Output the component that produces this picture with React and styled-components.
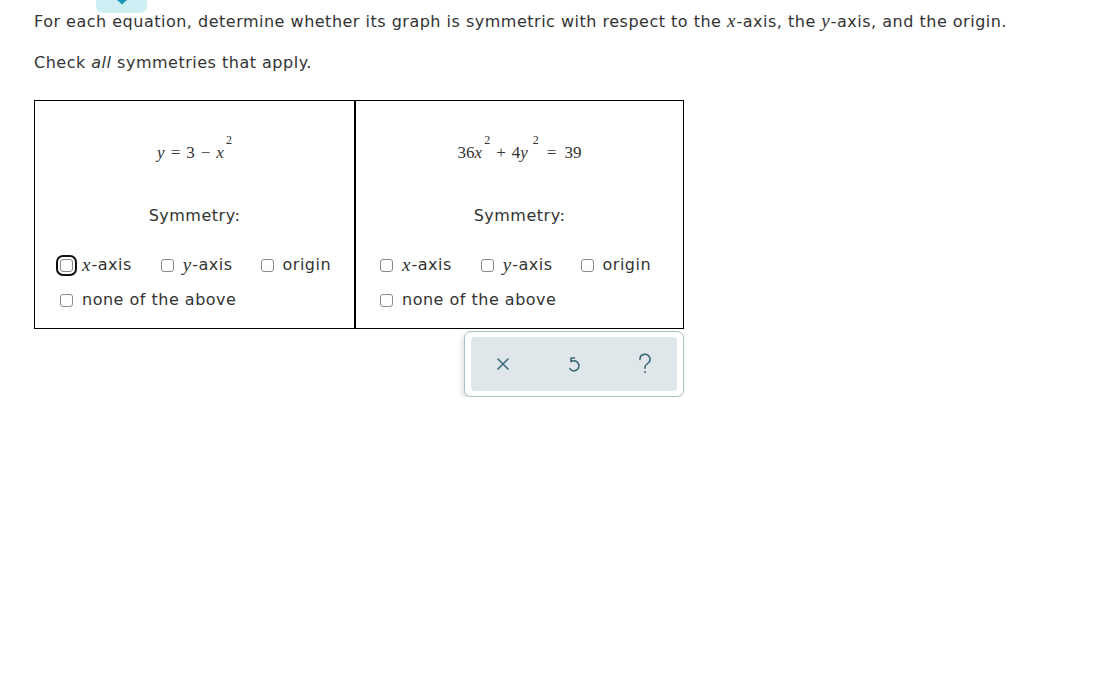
import React from "react";
import styled, { createGlobalStyle } from "styled-components";

const Global = createGlobalStyle`
  html, body { margin: 0; padding: 0; background: #fff; }
  body { font-family: "DejaVu Sans", Verdana, sans-serif; color: #333; }
`;

const Page = styled.div`
  position: relative;
  padding: 11px 0 0 34px;
`;

const TopTab = styled.div`
  position: absolute;
  left: 96px;
  top: 0;
  width: 51px;
  height: 13px;
  background: #cdeef3;
  border-radius: 0 0 7px 7px;
  display: flex;
  justify-content: center;
`;

const Para = styled.p`
  margin: 0 0 ${(p) => p.$mb || 0}px;
  font-size: 16px;
  letter-spacing: 0.5px;
  line-height: 20px;
  color: #333;
  white-space: nowrap;
`;

const MathVar = styled.span`
  font-family: "Liberation Serif", "Times New Roman", serif;
  font-style: italic;
  font-size: 19px;
  letter-spacing: 0;
  margin-right: 1px;
`;

const Table = styled.div`
  margin-top: 27px;
  width: 648px;
  height: 227px;
  border: 1px solid #000;
  display: grid;
  grid-template-columns: 319px 2px 327px;
`;

const Divider = styled.div`
  background: #000;
`;

const Cell = styled.div`
  display: flex;
  flex-direction: column;
  padding: 42px 0 0 ${(p) => p.$pl}px;
`;

const Equation = styled.div`
  align-self: center;
  display: flex;
  align-items: baseline;
  margin-left: ${(p) => p.$shift || 0}px;
  font-family: "Liberation Serif", "Times New Roman", serif;
  font-size: 17px;
  line-height: 20px;
  color: #333;
  white-space: pre;
`;

const EqVar = styled.i`
  font-style: italic;
`;

const Op = styled.span`
  margin: 0 ${(p) => p.$m || 6}px;
`;

const Sup = styled.span`
  font-size: 12px;
  position: relative;
  top: -14px;
  margin-left: ${(p) => p.$ml || 2}px;
`;

const Label = styled.div`
  align-self: center;
  margin-left: ${(p) => p.$shift || 0}px;
  margin-top: 42px;
  font-size: 16px;
  letter-spacing: 0.5px;
  line-height: 20px;
`;

const OptionRow = styled.div`
  display: flex;
  align-items: center;
  margin-top: ${(p) => p.$mt}px;
  height: 20px;
`;

const Option = styled.label`
  display: flex;
  align-items: center;
  margin-right: ${(p) => p.$mr || 0}px;
  font-size: 16px;
  letter-spacing: 0.5px;
  line-height: 20px;
  white-space: nowrap;
`;

const Box = styled.span`
  box-sizing: border-box;
  width: 13px;
  height: 13px;
  border: 1px solid #8a8a8a;
  border-radius: 3px;
  background: #fff;
  margin-right: 9px;
  flex: none;
  outline: ${(p) => (p.$focus ? "2px solid #111" : "none")};
  outline-offset: 2px;
`;

const ToolbarWrap = styled.div`
  width: 650px;
  display: flex;
  justify-content: flex-end;
  margin-top: 2px;
`;

const Toolbar = styled.div`
  box-sizing: border-box;
  width: 220px;
  height: 66px;
  border: 1px solid #a9c0c8;
  border-radius: 7px;
  background: #fff;
  box-shadow: -2px 3px 5px rgba(0, 0, 0, 0.12);
  padding: 5px 6px;
`;

const ToolPanel = styled.div`
  height: 100%;
  background: #e0e7ea;
  border-radius: 4px;
  display: grid;
  grid-template-columns: 1fr 1fr 1fr;
  align-items: center;
  justify-items: center;
`;

const ToolButton = styled.button`
  border: 0;
  background: transparent;
  padding: 0;
  display: flex;
  margin-left: ${(p) => p.$shift || 0}px;
`;

const XIcon = () => (
  <svg width="14" height="14" viewBox="0 0 14 14">
    <path d="M2 2 L12 12 M12 2 L2 12" stroke="#3f6a79" strokeWidth="1.6" strokeLinecap="round" />
  </svg>
);

const UndoIcon = () => (
  <svg width="16" height="18" viewBox="0 0 16 18">
    <path
      d="M8.5 3 L5 3 L5 6.8 A5 5 0 1 1 3.8 13.6"
      fill="none"
      stroke="#3f6a79"
      strokeWidth="1.6"
      strokeLinecap="round"
      strokeLinejoin="round"
    />
  </svg>
);

const HelpIcon = () => (
  <svg width="16" height="22" viewBox="0 0 16 22">
    <path
      d="M3 6.5 A5 5 0 1 1 10.5 10.6 C9 11.5 8 12.4 8 14.2 L8 15.2"
      fill="none"
      stroke="#3f6a79"
      strokeWidth="1.6"
      strokeLinecap="round"
    />
    <circle cx="8" cy="19" r="1" fill="#3f6a79" />
  </svg>
);

const Chevron = () => (
  <svg width="14" height="6" viewBox="0 0 14 6">
    <path d="M2 0 L7 4.5 L12 0 Z" fill="#1a98b4" />
  </svg>
);

const Options = ({ focusFirst }) => (
  <>
    <OptionRow $mt={29}>
      <Option $mr={29}>
        <Box $focus={focusFirst} />
        <MathVar>x</MathVar>-axis
      </Option>
      <Option $mr={28}>
        <Box />
        <MathVar>y</MathVar>-axis
      </Option>
      <Option>
        <Box />
        origin
      </Option>
    </OptionRow>
    <OptionRow $mt={15}>
      <Option>
        <Box />
        none of the above
      </Option>
    </OptionRow>
  </>
);

export default function App() {
  return (
    <>
      <Global />
      <Page>
        <TopTab>
          <Chevron />
        </TopTab>
        <Para $mb={21}>
          For each equation, determine whether its graph is symmetric with respect to the{" "}
          <MathVar>x</MathVar>-axis, the <MathVar>y</MathVar>-axis, and the origin.
        </Para>
        <Para>
          Check <i>all</i> symmetries that apply.
        </Para>
        <Table>
          <Cell $pl={25}>
            <Equation $shift={-25}>
              <EqVar>y</EqVar>
              <Op>=</Op>3<Op>−</Op>
              <EqVar>x</EqVar>
              <Sup>2</Sup>
            </Equation>
            <Label $shift={-25}>Symmetry:</Label>
            <Options focusFirst />
          </Cell>
          <Divider />
          <Cell $pl={24}>
            <Equation $shift={-24}>
              36<EqVar>x</EqVar>
              <Sup>2</Sup>
              <Op $m={6}>+</Op>4<EqVar>y</EqVar>
              <Sup $ml={5}>2</Sup>
              <Op $m={8}>=</Op>39
            </Equation>
            <Label $shift={-24}>Symmetry:</Label>
            <Options />
          </Cell>
        </Table>
        <ToolbarWrap>
          <Toolbar>
            <ToolPanel>
              <ToolButton $shift={-4}>
                <XIcon />
              </ToolButton>
              <ToolButton>
                <UndoIcon />
              </ToolButton>
              <ToolButton $shift={4}>
                <HelpIcon />
              </ToolButton>
            </ToolPanel>
          </Toolbar>
        </ToolbarWrap>
      </Page>
    </>
  );
}
